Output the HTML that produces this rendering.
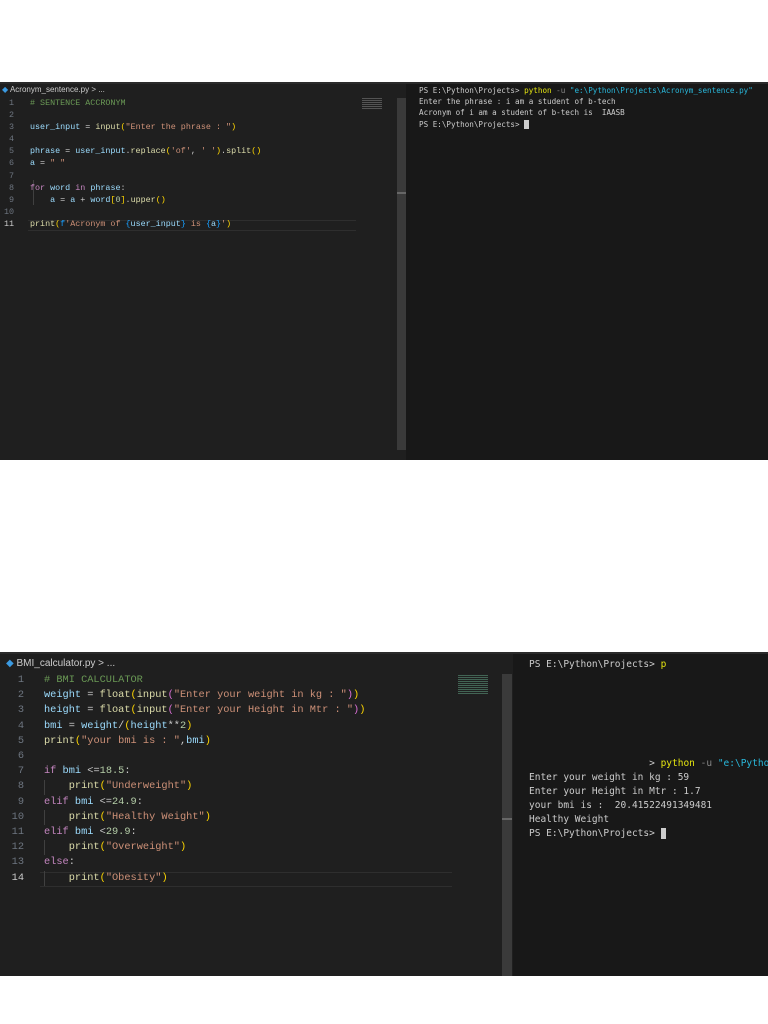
<!DOCTYPE html>
<html><head><meta charset="utf-8"><style>
*{margin:0;padding:0;box-sizing:border-box}
body{width:768px;height:1024px;background:#fff;position:relative;overflow:hidden;font-family:"Liberation Mono",monospace}
.abs{position:absolute}
.ed{background:#1f1f1f}
.term{background:#181818;overflow:hidden}
.ln{position:absolute;white-space:pre;color:#cccccc}
.n{color:#6e7681;position:absolute;text-align:right;white-space:pre}
.c{color:#6a9955}.v{color:#9cdcfe}.f{color:#dcdcaa}.s{color:#ce9178}.k{color:#c586c0}.num{color:#b5cea8}.y{color:#ffd700}.p{color:#da70d6}.b{color:#179fff}
.tab{font-family:"Liberation Sans",sans-serif;color:#ccc;position:absolute;white-space:pre}
.t{position:absolute;white-space:pre;color:#cccccc;font-family:"DejaVu Sans Mono",monospace}
</style></head><body>
<!-- TOP -->
<div class="abs ed" style="left:0;top:83px;width:406px;height:377px"></div>
<div class="abs" style="left:397px;top:98px;width:9px;height:352px;background:#3a3a3a"></div>
<div class="abs" style="left:397px;top:192px;width:9px;height:2px;background:#666"></div>
<div class="abs term" style="left:406px;top:83px;width:362px;height:377px">
<div class="t" style="left:13px;top:2px;font-size:7.6px;line-height:11.2px">PS E:\Python\Projects&gt; <span style="color:#e5e510">python</span> <span style="color:#888">-u</span> <span style="color:#29b8db">"e:\Python\Projects\Acronym_sentence.py"</span>
Enter the phrase : i am a student of b-tech
Acronym of i am a student of b-tech is  IAASB
PS E:\Python\Projects&gt; <span style="background:#ccc">&#160;</span></div>
</div>
<div class="abs" style="left:0;top:82px;width:768px;height:2px;background:#2b2b2b"></div>
<div class="abs" style="left:28px;top:220px;width:328px;height:11px;border-top:1px solid #2e2e2e;border-bottom:1px solid #2e2e2e"></div>
<div class="abs" style="left:33px;top:180px;width:1px;height:25px;background:#404040"></div>
<div class="abs" style="left:362px;top:97px;width:20px;height:12px;background:repeating-linear-gradient(#1f1f1f 0 1px,#777 1px 2px);opacity:.6"></div>
<div class="tab" style="left:2px;top:85px;font-size:8px"><span style="color:#3b9ae1">◆</span> Acronym_sentence.py &gt; ...</div>
<div style="font-size:8.4px;line-height:12.1px">
<div class="n" style="left:0;width:14px;top:97px">1
2
3
4
5
6
7
8
9
10
<span style="color:#ccc">11</span></div>
<div class="ln" style="left:30px;top:97px"><span class="c"># SENTENCE ACCRONYM</span>

<span class="v">user_input</span> = <span class="f">input</span><span class="y">(</span><span class="s">"Enter the phrase : "</span><span class="y">)</span>

<span class="v">phrase</span> = <span class="v">user_input</span>.<span class="f">replace</span><span class="y">(</span><span class="s">'of'</span>, <span class="s">' '</span><span class="y">)</span>.<span class="f">split</span><span class="y">()</span>
<span class="v">a</span> = <span class="s">" "</span>

<span class="k">for</span> <span class="v">word</span> <span class="k">in</span> <span class="v">phrase</span>:
    <span class="v">a</span> = <span class="v">a</span> + <span class="v">word</span><span class="y">[</span><span class="num">0</span><span class="y">]</span>.<span class="f">upper</span><span class="y">()</span>

<span class="f">print</span><span class="y">(</span><span class="b">f</span><span class="s">'Acronym of </span><span class="b">{</span><span class="v">user_input</span><span class="b">}</span><span class="s"> is </span><span class="b">{</span><span class="v">a</span><span class="b">}</span><span class="s">'</span><span class="y">)</span></div>
</div>

<!-- BOTTOM -->
<div class="abs ed" style="left:0;top:652px;width:513px;height:324px"></div>
<div class="abs" style="left:0;top:652px;width:768px;height:2px;background:#2b2b2b"></div>
<div class="abs" style="left:502px;top:674px;width:10px;height:302px;background:#3a3a3a"></div>
<div class="abs" style="left:502px;top:818px;width:10px;height:2px;background:#666"></div>
<div class="abs term" style="left:513px;top:654px;width:255px;height:322px">
<div class="t" style="left:16px;top:4px;font-size:9.5px;line-height:14px">PS E:\Python\Projects&gt; <span style="color:#e5e510">p</span></div>
<div class="t" style="left:16px;top:103px;font-size:9.5px;line-height:14px">                     &gt; <span style="color:#e5e510">python</span> <span style="color:#888">-u</span> <span style="color:#29b8db">"e:\Python\Projects\BMI_calculator.py"</span>
Enter your weight in kg : 59
Enter your Height in Mtr : 1.7
your bmi is :  20.41522491349481
Healthy Weight
PS E:\Python\Projects&gt; <span style="background:#ccc">&#160;</span></div>
</div>
<div class="abs" style="left:40px;top:872px;width:412px;height:15px;border-top:1px solid #2e2e2e;border-bottom:1px solid #2e2e2e"></div>
<div class="abs" style="left:44px;top:780px;width:1px;height:15px;background:#404040"></div>
<div class="abs" style="left:44px;top:810px;width:1px;height:15px;background:#404040"></div>
<div class="abs" style="left:44px;top:840px;width:1px;height:15px;background:#404040"></div>
<div class="abs" style="left:44px;top:871px;width:1px;height:15px;background:#404040"></div>
<div class="abs" style="left:458px;top:674px;width:30px;height:20px;background:repeating-linear-gradient(#1f1f1f 0 1px,#6a8 1px 2px);opacity:.5"></div>
<div class="tab" style="left:6px;top:658px;font-size:10px"><span style="color:#3b9ae1">◆</span> BMI_calculator.py &gt; ...</div>
<div style="font-size:10.3px;line-height:15.2px">
<div class="n" style="left:0;width:24px;top:673px">1
2
3
4
5
6
7
8
9
10
11
12
13
<span style="color:#ccc">14</span></div>
<div class="ln" style="left:44px;top:673px"><span class="c"># BMI CALCULATOR</span>
<span class="v">weight</span> = <span class="f">float</span><span class="y">(</span><span class="f">input</span><span class="p">(</span><span class="s">"Enter your weight in kg : "</span><span class="p">)</span><span class="y">)</span>
<span class="v">height</span> = <span class="f">float</span><span class="y">(</span><span class="f">input</span><span class="p">(</span><span class="s">"Enter your Height in Mtr : "</span><span class="p">)</span><span class="y">)</span>
<span class="v">bmi</span> = <span class="v">weight</span>/<span class="y">(</span><span class="v">height</span>**<span class="num">2</span><span class="y">)</span>
<span class="f">print</span><span class="y">(</span><span class="s">"your bmi is : "</span>,<span class="v">bmi</span><span class="y">)</span>

<span class="k">if</span> <span class="v">bmi</span> &lt;=<span class="num">18.5</span>:
    <span class="f">print</span><span class="y">(</span><span class="s">"Underweight"</span><span class="y">)</span>
<span class="k">elif</span> <span class="v">bmi</span> &lt;=<span class="num">24.9</span>:
    <span class="f">print</span><span class="y">(</span><span class="s">"Healthy Weight"</span><span class="y">)</span>
<span class="k">elif</span> <span class="v">bmi</span> &lt;<span class="num">29.9</span>:
    <span class="f">print</span><span class="y">(</span><span class="s">"Overweight"</span><span class="y">)</span>
<span class="k">else</span>:
    <span class="f">print</span><span class="y">(</span><span class="s">"Obesity"</span><span class="y">)</span></div>
</div>
</body></html>
